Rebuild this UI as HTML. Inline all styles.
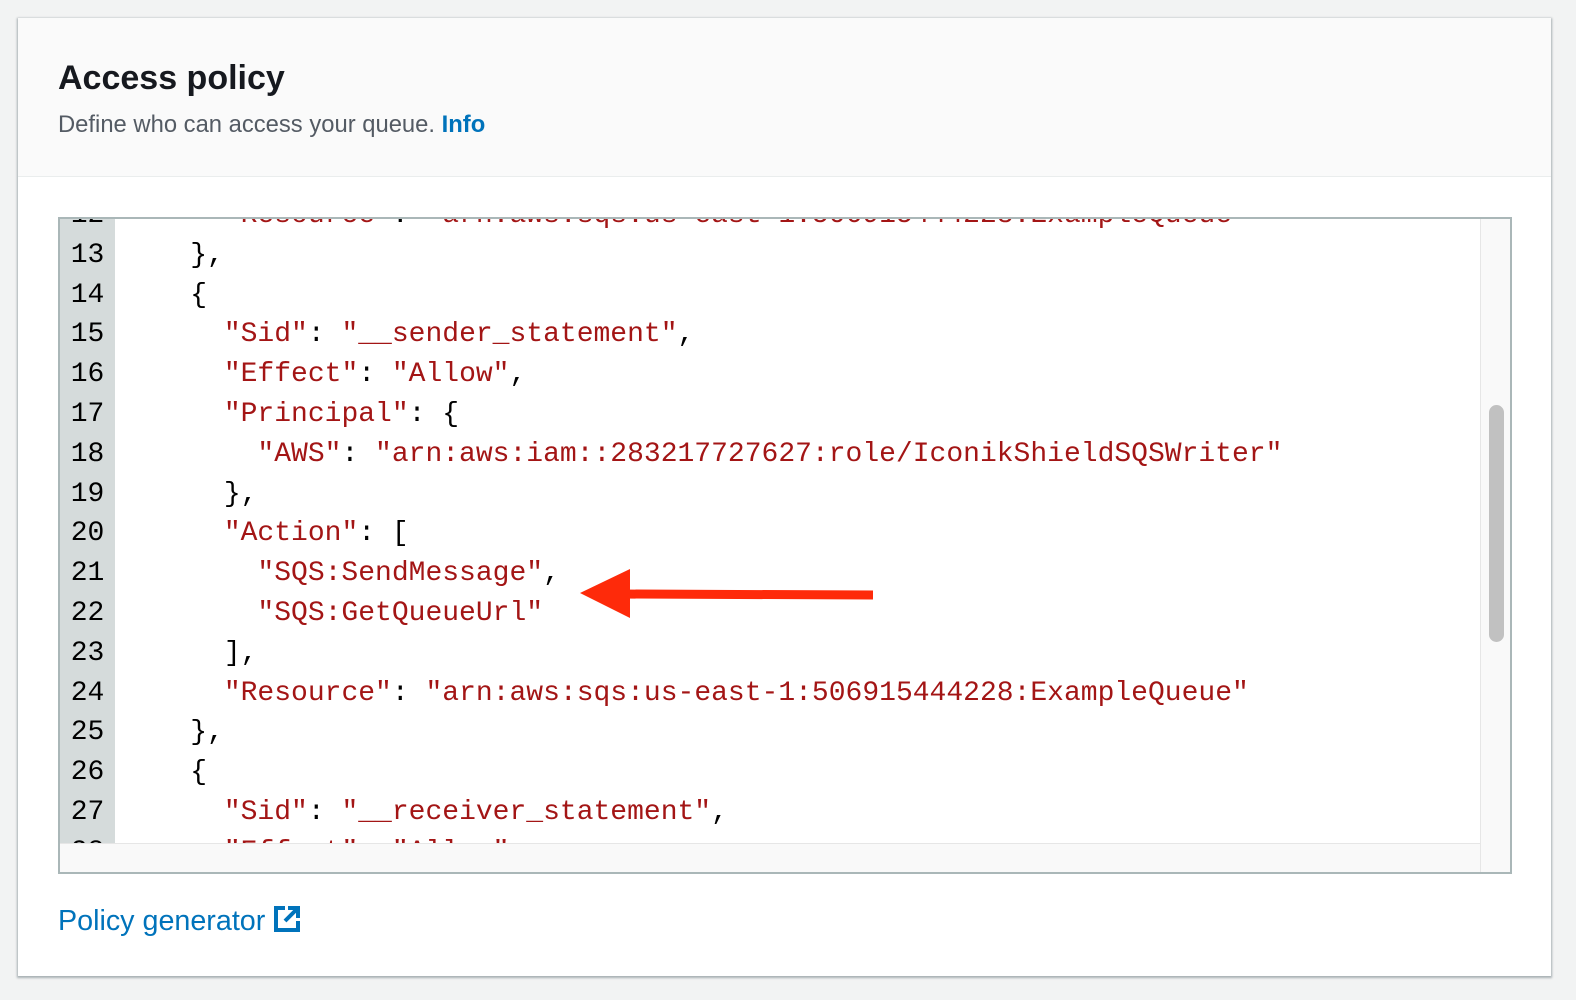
<!DOCTYPE html>
<html><head><style>
body{margin:0;width:1576px;height:1000px;background:#f2f3f3;font-family:"Liberation Sans",sans-serif;position:relative;overflow:hidden}
.card{position:absolute;left:18px;top:18px;width:1533px;height:958px;background:#fff;box-shadow:0 1px 2px 1px rgba(0,28,36,.3)}
.hdr{position:absolute;left:0;top:0;width:100%;height:158px;background:#fafafa;border-bottom:1px solid #eaeded}
h1{position:absolute;left:40px;top:41px;margin:0;font-size:34px;font-weight:bold;color:#16191f}
.sub{position:absolute;left:40px;top:93px;font-size:23.8px;color:#545b64}
.sub b{color:#0073bb}
.ed{position:absolute;left:58px;top:217px;width:1450px;height:653px;border:2px solid #aab7b8;overflow:hidden;background:#fff}
.gut{position:absolute;left:0;top:0;width:55px;height:100%;background:#d5dbdb}
.code{position:absolute;left:0;top:-23px;font-family:"Liberation Mono",monospace;font-size:28px;line-height:39.8px;white-space:pre;color:#000}
.code div{height:39.8px}
.ln{display:inline-block;width:55px;text-align:center;margin-right:8px}
.s{color:#a31515}
.hs{position:absolute;left:0;top:624px;width:1420px;height:29px;background:#f9f9f9;border-top:1px solid #e6e6e6}
.vs{position:absolute;left:1420px;top:0;width:30px;height:100%;background:#f9f9f9;border-left:1px solid #e6e6e6}
.th{position:absolute;left:8px;top:186px;width:15px;height:237px;border-radius:8px;background:#c1c1c1}
.pg{position:absolute;left:58px;top:905px;font-size:28.7px;color:#0073bb}
</style></head><body>
<div class="card"><div class="hdr"><h1>Access policy</h1><div class="sub">Define who can access your queue. <b>Info</b></div></div></div>
<div class="ed"><div class="gut"></div>
<div class="code"><div><span class="ln">12</span>      <span class="s">"Resource"</span>: <span class="s">"arn:aws:sqs:us-east-1:506915444228:ExampleQueue"</span></div><div><span class="ln">13</span>    },</div><div><span class="ln">14</span>    {</div><div><span class="ln">15</span>      <span class="s">"Sid"</span>: <span class="s">"__sender_statement"</span>,</div><div><span class="ln">16</span>      <span class="s">"Effect"</span>: <span class="s">"Allow"</span>,</div><div><span class="ln">17</span>      <span class="s">"Principal"</span>: {</div><div><span class="ln">18</span>        <span class="s">"AWS"</span>: <span class="s">"arn:aws:iam::283217727627:role/IconikShieldSQSWriter"</span></div><div><span class="ln">19</span>      },</div><div><span class="ln">20</span>      <span class="s">"Action"</span>: [</div><div><span class="ln">21</span>        <span class="s">"SQS:SendMessage"</span>,</div><div><span class="ln">22</span>        <span class="s">"SQS:GetQueueUrl"</span></div><div><span class="ln">23</span>      ],</div><div><span class="ln">24</span>      <span class="s">"Resource"</span>: <span class="s">"arn:aws:sqs:us-east-1:506915444228:ExampleQueue"</span></div><div><span class="ln">25</span>    },</div><div><span class="ln">26</span>    {</div><div><span class="ln">27</span>      <span class="s">"Sid"</span>: <span class="s">"__receiver_statement"</span>,</div><div><span class="ln">28</span>      <span class="s">"Effect"</span>: <span class="s">"Allow"</span>,</div></div>
<div class="hs"></div><div class="vs"><div class="th"></div></div>
</div>
<svg style="position:absolute;left:0;top:0" width="1576" height="1000"><line x1="620" y1="594" x2="873" y2="595" stroke="#fe2a0a" stroke-width="9"/><polygon points="580,593 630,569 630,618" fill="#fe2a0a"/></svg>
<div class="pg">Policy generator <svg width="28" height="28" viewBox="0 0 28 28" style="vertical-align:-3px"><path d="M12 3H3v22h22v-9" fill="none" stroke="#0073bb" stroke-width="4"/><path d="M15 3h10v10M25 3L12 16" fill="none" stroke="#0073bb" stroke-width="4"/></svg></div>
</body></html>
